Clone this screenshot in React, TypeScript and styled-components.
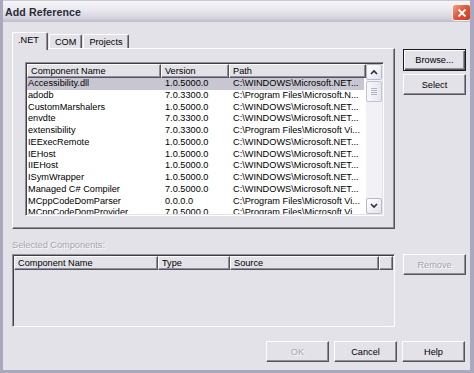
import { FC } from 'react';
import styled, { createGlobalStyle } from 'styled-components';

const FACE = '#e3e2e8';
const FRAME = '#a9a8be';
const SHADOW = '#8f8e99';
const DARK = '#55545c';

type Row = { name: string; version: string; path: string };

const WIN_NET = 'C:\\WINDOWS\\Microsoft.NET...';
const PF_VI = 'C:\\Program Files\\Microsoft Vi...';

const rows: Row[] = [
  { name: 'Accessibility.dll', version: '1.0.5000.0', path: WIN_NET },
  { name: 'adodb', version: '7.0.3300.0', path: 'C:\\Program Files\\Microsoft.N...' },
  { name: 'CustomMarshalers', version: '1.0.5000.0', path: WIN_NET },
  { name: 'envdte', version: '7.0.3300.0', path: WIN_NET },
  { name: 'extensibility', version: '7.0.3300.0', path: PF_VI },
  { name: 'IEExecRemote', version: '1.0.5000.0', path: WIN_NET },
  { name: 'IEHost', version: '1.0.5000.0', path: WIN_NET },
  { name: 'IIEHost', version: '1.0.5000.0', path: WIN_NET },
  { name: 'ISymWrapper', version: '1.0.5000.0', path: WIN_NET },
  { name: 'Managed C# Compiler', version: '7.0.5000.0', path: WIN_NET },
  { name: 'MCppCodeDomParser', version: '0.0.0.0', path: PF_VI },
  { name: 'MCppCodeDomProvider', version: '7.0.5000.0', path: PF_VI },
];

const App: FC = () => {
  return (
    <>
      <GlobalStyle />
      <Window>
        <TitleBar>
          <Title>Add Reference</Title>
          <CloseButton>
            <svg width='10' height='10' viewBox='0 0 10 10'>
              <path d='M1.5 1.5 L8.5 8.5 M8.5 1.5 L1.5 8.5' stroke='#fff' strokeWidth='1.8' />
            </svg>
          </CloseButton>
        </TitleBar>

        <Body>
          <TopRow>
            <TabArea>
              <TabStrip>
                <Tab active>.NET</Tab>
                <Tab>COM</Tab>
                <Tab>Projects</Tab>
              </TabStrip>
              <TabPanel>
                <ListView>
                  <ListColumns>
                    <HeaderRow>
                      <HeaderCell w={134}>Component Name</HeaderCell>
                      <HeaderCell w={68}>Version</HeaderCell>
                      <HeaderCell w={137}>Path</HeaderCell>
                    </HeaderRow>
                    {rows.map((r, i) => (
                      <ItemRow key={r.name} selected={i === 0}>
                        <ItemCell w={134} first>{r.name}</ItemCell>
                        <ItemCell w={68}>{r.version}</ItemCell>
                        <ItemCell w={137}>{r.path}</ItemCell>
                      </ItemRow>
                    ))}
                  </ListColumns>
                  <ScrollBar>
                    <ScrollArrow>
                      <svg width='8' height='6' viewBox='0 0 8 6'>
                        <path d='M1 5 L4 2 L7 5' fill='none' stroke='#2c2c3c' strokeWidth='1.6' />
                      </svg>
                    </ScrollArrow>
                    <ScrollThumb>
                      <Grip />
                      <Grip />
                      <Grip />
                      <Grip />
                    </ScrollThumb>
                    <ScrollTrack />
                    <ScrollArrow>
                      <svg width='8' height='6' viewBox='0 0 8 6'>
                        <path d='M1 1 L4 4 L7 1' fill='none' stroke='#2c2c3c' strokeWidth='1.6' />
                      </svg>
                    </ScrollArrow>
                  </ScrollBar>
                </ListView>
              </TabPanel>
            </TabArea>
            <ButtonColumn>
              <Button isDefault>Browse...</Button>
              <Button>Select</Button>
            </ButtonColumn>
          </TopRow>

          <SectionLabel>Selected Components:</SectionLabel>

          <BottomRow>
            <SelectedList>
              <HeaderRow>
                <HeaderCell w={144}>Component Name</HeaderCell>
                <HeaderCell w={72}>Type</HeaderCell>
                <HeaderCell w={149}>Source</HeaderCell>
                <HeaderCell w={14} />
              </HeaderRow>
            </SelectedList>
            <ButtonColumn>
              <Button disabled>Remove</Button>
            </ButtonColumn>
          </BottomRow>

          <Footer>
            <Button disabled>OK</Button>
            <Button>Cancel</Button>
            <Button>Help</Button>
          </Footer>
        </Body>
      </Window>
    </>
  );
};

export default App;

// Styled Components
const GlobalStyle = createGlobalStyle`
  html, body {
    margin: 0;
    padding: 0;
    background: ${FACE};
  }
  * {
    box-sizing: border-box;
  }
`;

const Window = styled.div`
  width: 474px;
  height: 373px;
  display: flex;
  flex-direction: column;
  background: ${FACE};
  border-left: 3px solid ${FRAME};
  border-right: 4px solid ${FRAME};
  border-bottom: 3px solid ${FRAME};
  font-family: 'Liberation Sans', Arial, sans-serif;
  font-size: 9.2px;
  color: #000;
  overflow: hidden;
`;

const TitleBar = styled.div`
  height: 22px;
  margin: 0 -4px 0 -3px;
  padding: 0 3px 0 5px;
  display: flex;
  align-items: center;
  justify-content: space-between;
  background: linear-gradient(#f6f6f9 0%, #e8e7ee 45%, #d5d4de 80%, #bdbccb 100%);
  border-top: 1px solid #c9c8d6;
`;

const Title = styled.span`
  font-size: 10.6px;
  font-weight: bold;
  color: #2a2a36;
  letter-spacing: 0.1px;
`;

const CloseButton = styled.span`
  width: 19px;
  height: 17px;
  margin-top: 2px;
  display: flex;
  align-items: center;
  justify-content: center;
  border-radius: 3px;
  border: 1px solid #f4f4f4;
  background: linear-gradient(135deg, #f0a48c 0%, #e2593b 45%, #c93a1f 100%);
`;

const Body = styled.div`
  flex: 1;
  display: flex;
  flex-direction: column;
  padding: 10px 5px 0 9px;
`;

const TopRow = styled.div`
  display: flex;
  gap: 8px;
`;

const TabArea = styled.div`
  width: 383px;
  display: flex;
  flex-direction: column;
`;

const TabStrip = styled.div`
  height: 16px;
  display: flex;
  align-items: flex-end;
`;

const Tab = styled.div<{ active?: boolean }>`
  position: relative;
  z-index: ${(p) => (p.active ? 2 : 0)};
  height: ${(p) => (p.active ? 18 : 14)}px;
  margin-bottom: ${(p) => (p.active ? -2 : 0)}px;
  padding: ${(p) => (p.active ? '0 8px 3px 5px' : '0 5px 0 5px')};
  margin-left: ${(p) => (p.active ? 0 : 1)}px;
  display: flex;
  align-items: center;
  background: ${FACE};
  border-top: 1px solid #fff;
  border-left: 1px solid #fff;
  border-right: 1px solid ${DARK};
  box-shadow: inset -1px 0 ${SHADOW};
  border-radius: 2px 2px 0 0;
`;

const TabPanel = styled.div`
  height: 181px;
  padding: 13px 10px 12px 12px;
  border-top: 1px solid #fff;
  border-left: 1px solid #fff;
  border-right: 1px solid ${DARK};
  border-bottom: 1px solid ${DARK};
  box-shadow: inset -1px -1px ${SHADOW};
`;

const ListView = styled.div`
  width: 359px;
  height: 154px;
  display: flex;
  background: #fff;
  border-top: 1px solid ${SHADOW};
  border-left: 1px solid ${SHADOW};
  border-right: 1px solid #fff;
  border-bottom: 1px solid #fff;
  box-shadow: inset 1px 1px #404048, inset -1px -1px ${FACE};
  padding: 1px;
  overflow: hidden;
`;

const ListColumns = styled.div`
  flex: 1;
  display: flex;
  flex-direction: column;
  overflow: hidden;
`;

const HeaderRow = styled.div`
  display: flex;
  flex-shrink: 0;
  height: 14px;
  background: ${FACE};
`;

const HeaderCell = styled.div<{ w: number }>`
  width: ${(p) => p.w}px;
  flex-shrink: 0;
  padding-left: 3px;
  line-height: 12px;
  white-space: nowrap;
  overflow: hidden;
  border-top: 1px solid #fff;
  border-left: 1px solid #fff;
  border-right: 1px solid ${DARK};
  border-bottom: 1px solid ${DARK};
  box-shadow: inset -1px -1px ${SHADOW};
`;

const ItemRow = styled.div<{ selected?: boolean }>`
  display: flex;
  flex-shrink: 0;
  height: 11.75px;
  margin-right: 2px;
  background: ${(p) => (p.selected ? '#c8c7d1' : 'transparent')};
`;

const ItemCell = styled.div<{ w: number; first?: boolean }>`
  width: ${(p) => p.w}px;
  flex-shrink: 0;
  padding-left: ${(p) => (p.first ? 1 : 4)}px;
  line-height: 11.75px;
  white-space: nowrap;
  overflow: hidden;
`;

const ScrollBar = styled.div`
  width: 16px;
  flex-shrink: 0;
  display: flex;
  flex-direction: column;
  background: #f2f2f6;
`;

const ScrollArrow = styled.div`
  height: 16px;
  flex-shrink: 0;
  display: flex;
  align-items: center;
  justify-content: center;
  border: 1px solid #b9b9c9;
  border-radius: 2px;
  background: linear-gradient(135deg, #ffffff, #e3e3ee);
`;

const ScrollThumb = styled.div`
  height: 21px;
  flex-shrink: 0;
  display: flex;
  flex-direction: column;
  align-items: center;
  justify-content: center;
  gap: 1px;
  margin-top: 1px;
  border: 1px solid #c3c3d2;
  border-radius: 2px;
  background: linear-gradient(90deg, #f7f7fb, #e6e6f0);
`;

const Grip = styled.div`
  width: 6px;
  height: 1px;
  background: #b4b4c6;
`;

const ScrollTrack = styled.div`
  flex: 1;
`;

const ButtonColumn = styled.div`
  width: 63px;
  display: flex;
  flex-direction: column;
  gap: 3px;
  padding-top: 17px;
`;

const Button = styled.button<{ isDefault?: boolean }>`
  height: ${(p) => (p.isDefault ? 22 : 21)}px;
  width: 63px;
  padding: 0;
  font-family: 'Liberation Sans', Arial, sans-serif;
  font-size: 9.2px;
  color: ${(p) => (p.disabled ? '#a6a5ae' : '#000')};
  text-shadow: ${(p) => (p.disabled ? '1px 1px #fbfbfd' : 'none')};
  background: ${FACE};
  border-top: 1px solid ${(p) => (p.isDefault ? '#1a1a1a' : '#fff')};
  border-left: 1px solid ${(p) => (p.isDefault ? '#1a1a1a' : '#fff')};
  border-right: 1px solid ${(p) => (p.isDefault ? '#1a1a1a' : DARK)};
  border-bottom: 1px solid ${(p) => (p.isDefault ? '#1a1a1a' : DARK)};
  box-shadow: ${(p) =>
    p.isDefault
      ? `inset 1px 1px #fff, inset -1px -1px ${DARK}, inset -2px -2px ${SHADOW}`
      : `inset -1px -1px ${SHADOW}`};
`;

const SectionLabel = styled.div`
  margin-top: 11px;
  height: 14px;
  color: #a6a5ae;
  text-shadow: 1px 1px #fbfbfd;
`;

const BottomRow = styled.div`
  display: flex;
  gap: 8px;
  align-items: flex-start;

  & > ${ButtonColumn} {
    padding-top: 0;
  }
`;

const SelectedList = styled.div`
  width: 383px;
  height: 73px;
  padding: 1px;
  background: ${FACE};
  border-top: 1px solid ${SHADOW};
  border-left: 1px solid ${SHADOW};
  border-right: 1px solid #fff;
  border-bottom: 1px solid #fff;
  box-shadow: inset 1px 1px #404048;
`;

const Footer = styled.div`
  margin-top: 14px;
  display: flex;
  justify-content: flex-end;
  gap: 5px;
`;
